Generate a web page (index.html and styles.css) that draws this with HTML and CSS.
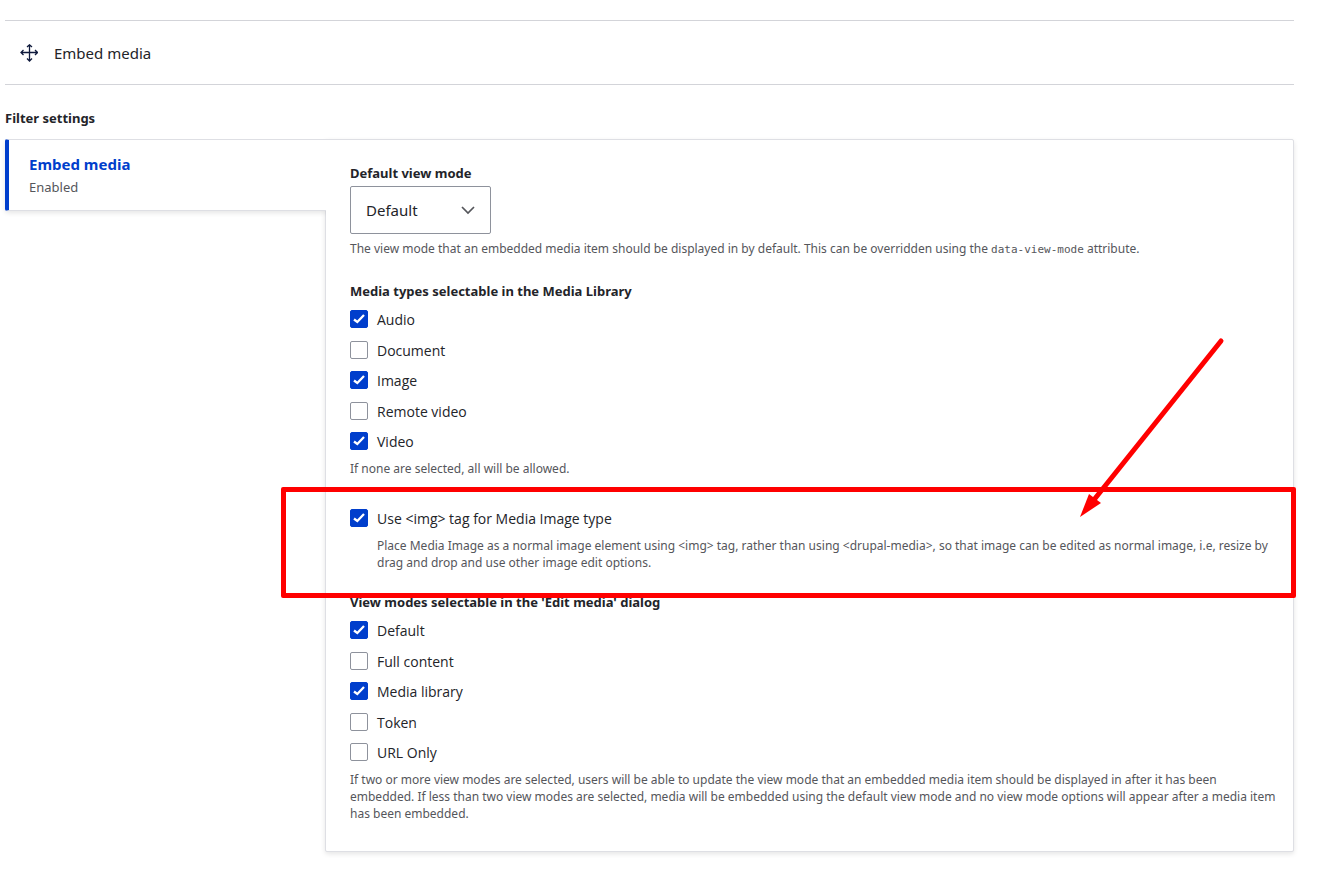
FILE: index.html
```html
<!DOCTYPE html>
<html lang="en">
<head>
<meta charset="utf-8">
<meta name="viewport" content="width=device-width, initial-scale=1">
<title>Filter settings</title>
<link rel="stylesheet" href="styles.css">
</head>
<body>
<main class="page">
  <div class="filter-row">
    <button class="drag-handle" type="button" aria-label="Drag to re-order">
      <svg width="18" height="18" viewBox="0 0 18 18" fill="none" stroke="#0f1a3c" stroke-width="1.3" aria-hidden="true">
        <path d="M9.500 1v16M1 8.500h17M7 3 9.500 .8 12 3M7 14.500l2.500 2.500 2.500-2.500M3.500 6 1 8.500 3.500 11M15 6l2.500 2.500L15 11"/>
      </svg>
    </button>
    <span class="filter-name">Embed media</span>
  </div>

  <h2 class="section-title">Filter settings</h2>

  <div class="vertical-tabs">
    <nav class="tab-menu">
      <a class="tab" href="#embed-media">
        <strong class="tab-title">Embed media</strong>
        <span class="tab-summary">Enabled</span>
      </a>
    </nav>

    <form class="panel" id="embed-media">
      <div class="form-item">
        <label class="heading" for="view-mode">Default view mode</label>
        <div class="select-wrap">
          <select class="select" id="view-mode"><option>Default</option></select>
          <svg class="chevron" width="14" height="9" viewBox="0 0 14 9" fill="none" stroke="#55565b" stroke-width="1.7" aria-hidden="true"><path d="M1 1l6 6 6-6"/></svg>
        </div>
        <p class="description">The view mode that an embedded media item should be displayed in by default. This can be overridden using the <code>data-view-mode</code> attribute.</p>
      </div>

      <fieldset class="form-item">
        <legend class="heading">Media types selectable in the Media Library</legend>
        <div class="options">
          <label class="option"><input class="check" type="checkbox" checked>Audio</label>
          <label class="option"><input class="check" type="checkbox">Document</label>
          <label class="option"><input class="check" type="checkbox" checked>Image</label>
          <label class="option"><input class="check" type="checkbox">Remote video</label>
          <label class="option"><input class="check" type="checkbox" checked>Video</label>
        </div>
        <p class="description">If none are selected, all will be allowed.</p>
      </fieldset>

      <div class="form-item highlighted">
        <label class="option"><input class="check" type="checkbox" checked>Use &lt;img&gt; tag for Media Image type</label>
        <p class="description indented">Place Media Image as a normal image element using &lt;img&gt; tag, rather than using &lt;drupal-media&gt;, so that image can be edited as normal image, i.e, resize by drag and drop and use other image edit options.</p>
        <div class="marker">
          <svg class="arrow" width="150" height="184" viewBox="0 0 150 184" aria-hidden="true">
            <path d="M146 5 18 165" stroke="#f00" stroke-width="5" stroke-linecap="round"/>
            <path d="M5 181 14 158 26 167Z" fill="#f00"/>
          </svg>
        </div>
      </div>

      <fieldset class="form-item">
        <legend class="heading">View modes selectable in the 'Edit media' dialog</legend>
        <div class="options">
          <label class="option"><input class="check" type="checkbox" checked>Default</label>
          <label class="option"><input class="check" type="checkbox">Full content</label>
          <label class="option"><input class="check" type="checkbox" checked>Media library</label>
          <label class="option"><input class="check" type="checkbox">Token</label>
          <label class="option"><input class="check" type="checkbox">URL Only</label>
        </div>
        <p class="description">If two or more view modes are selected, users will be able to update the view mode that an embedded media item should be displayed in after it has been embedded. If less than two view modes are selected, media will be embedded using the default view mode and no view mode options will appear after a media item has been embedded.</p>
      </fieldset>
    </form>
  </div>
</main>
</body>
</html>
```

FILE: styles.css
```css
* {
  box-sizing: border-box;
}

body {
  margin: 0;
  background: #fff;
  color: #232429;
  font: 14px/18px "Segoe UI", "Noto Sans", sans-serif;
}

.page {
  padding: 20px 23px 38px 5px;
}

.filter-row {
  display: flex;
  align-items: center;
  gap: 16px;
  height: 65px;
  padding: 0 15px;
  border-top: 1px solid #d3d4d9;
  border-bottom: 1px solid #d3d4d9;
}

.drag-handle {
  display: flex;
  padding: 0;
  border: 0;
  background: none;
  cursor: move;
}

.filter-name {
  font-size: 15px;
}

.section-title {
  margin: 24px 0 12px;
  font-size: 13px;
  line-height: 18px;
}

.vertical-tabs {
  display: grid;
  grid-template-columns: 320px 1fr;
  align-items: start;
}

.tab-menu {
  position: relative;
  z-index: 1;
  margin-right: -1px;
}

.tab {
  display: flex;
  flex-direction: column;
  gap: 5px;
  height: 72px;
  padding: 15px 20px 0;
  border: solid #dedfe4;
  border-width: 1px 0 1px 4px;
  border-left-color: #003ecc;
  border-radius: 2px 0 0 2px;
  background: #fff;
  box-shadow: 0 2px 5px rgba(0, 0, 0, 0.1);
  clip-path: inset(0 0 -8px -6px);
  text-decoration: none;
}

.tab-title {
  color: #003ecc;
  font-size: 15px;
}

.tab-summary {
  color: #55565b;
  font-size: 13px;
}

.panel {
  min-width: 0;
  padding: 24px 16px 29px 24px;
  border: 1px solid #dedfe4;
  border-radius: 0 2px 2px 2px;
  background: #fff;
  box-shadow: 0 2px 5px rgba(0, 0, 0, 0.1);
}

.form-item {
  min-width: 0;
  margin: 0 0 24px;
  padding: 0;
  border: 0;
}

.form-item:last-child {
  margin-bottom: 0;
}

.heading {
  display: block;
  padding: 0;
  font-size: 13px;
  font-weight: 700;
  line-height: 18px;
}

.select-wrap {
  position: relative;
  width: 141px;
  margin-top: 4px;
}

.select {
  display: block;
  width: 100%;
  height: 48px;
  padding: 0 15px;
  border: 1px solid #8e929c;
  border-radius: 2px;
  appearance: none;
  background: #fff;
  color: #232429;
  font: inherit;
  font-size: 15px;
}

.chevron {
  position: absolute;
  top: 20px;
  right: 16px;
  pointer-events: none;
}

.description {
  margin: 6px 0 0;
  color: #55565b;
  font-size: 12px;
  line-height: 17px;
}

.description code {
  font: 11px/17px "DejaVu Sans Mono", monospace;
}

.description.indented {
  margin: 4px 0 0 27px;
}

.options {
  display: flex;
  flex-direction: column;
  justify-content: space-between;
  min-height: 156px;
  padding-top: 4px;
}

.options + .description {
  margin-top: 4px;
}

.option {
  display: flex;
  align-items: center;
  gap: 9px;
  height: 30px;
  padding-top: 2px;
  font-family: "Segoe UI", "Open Sans", sans-serif;
  font-size: 14px;
}

.check {
  flex: none;
  width: 18px;
  height: 18px;
  margin: 0 0 2px;
  border: 1px solid #8e929c;
  border-radius: 2px;
  appearance: none;
  background: #fff;
}

.check:checked {
  border-color: #003ecc;
  background: #003ecc url("data:image/svg+xml,%3Csvg xmlns='http://www.w3.org/2000/svg' width='16' height='16' fill='none' stroke='white' stroke-width='2.300'%3E%3Cpath d='M3 8.500 6.300 11 13 4'/%3E%3C/svg%3E") center no-repeat;
}

.highlighted {
  position: relative;
  margin: 26px 0 22px;
}

.marker {
  position: absolute;
  inset: -16px -19px -27px -69px;
  border: 5px solid #f00;
  border-radius: 2px;
  pointer-events: none;
}

.arrow {
  position: absolute;
  right: 66px;
  bottom: 73px;
}
```
